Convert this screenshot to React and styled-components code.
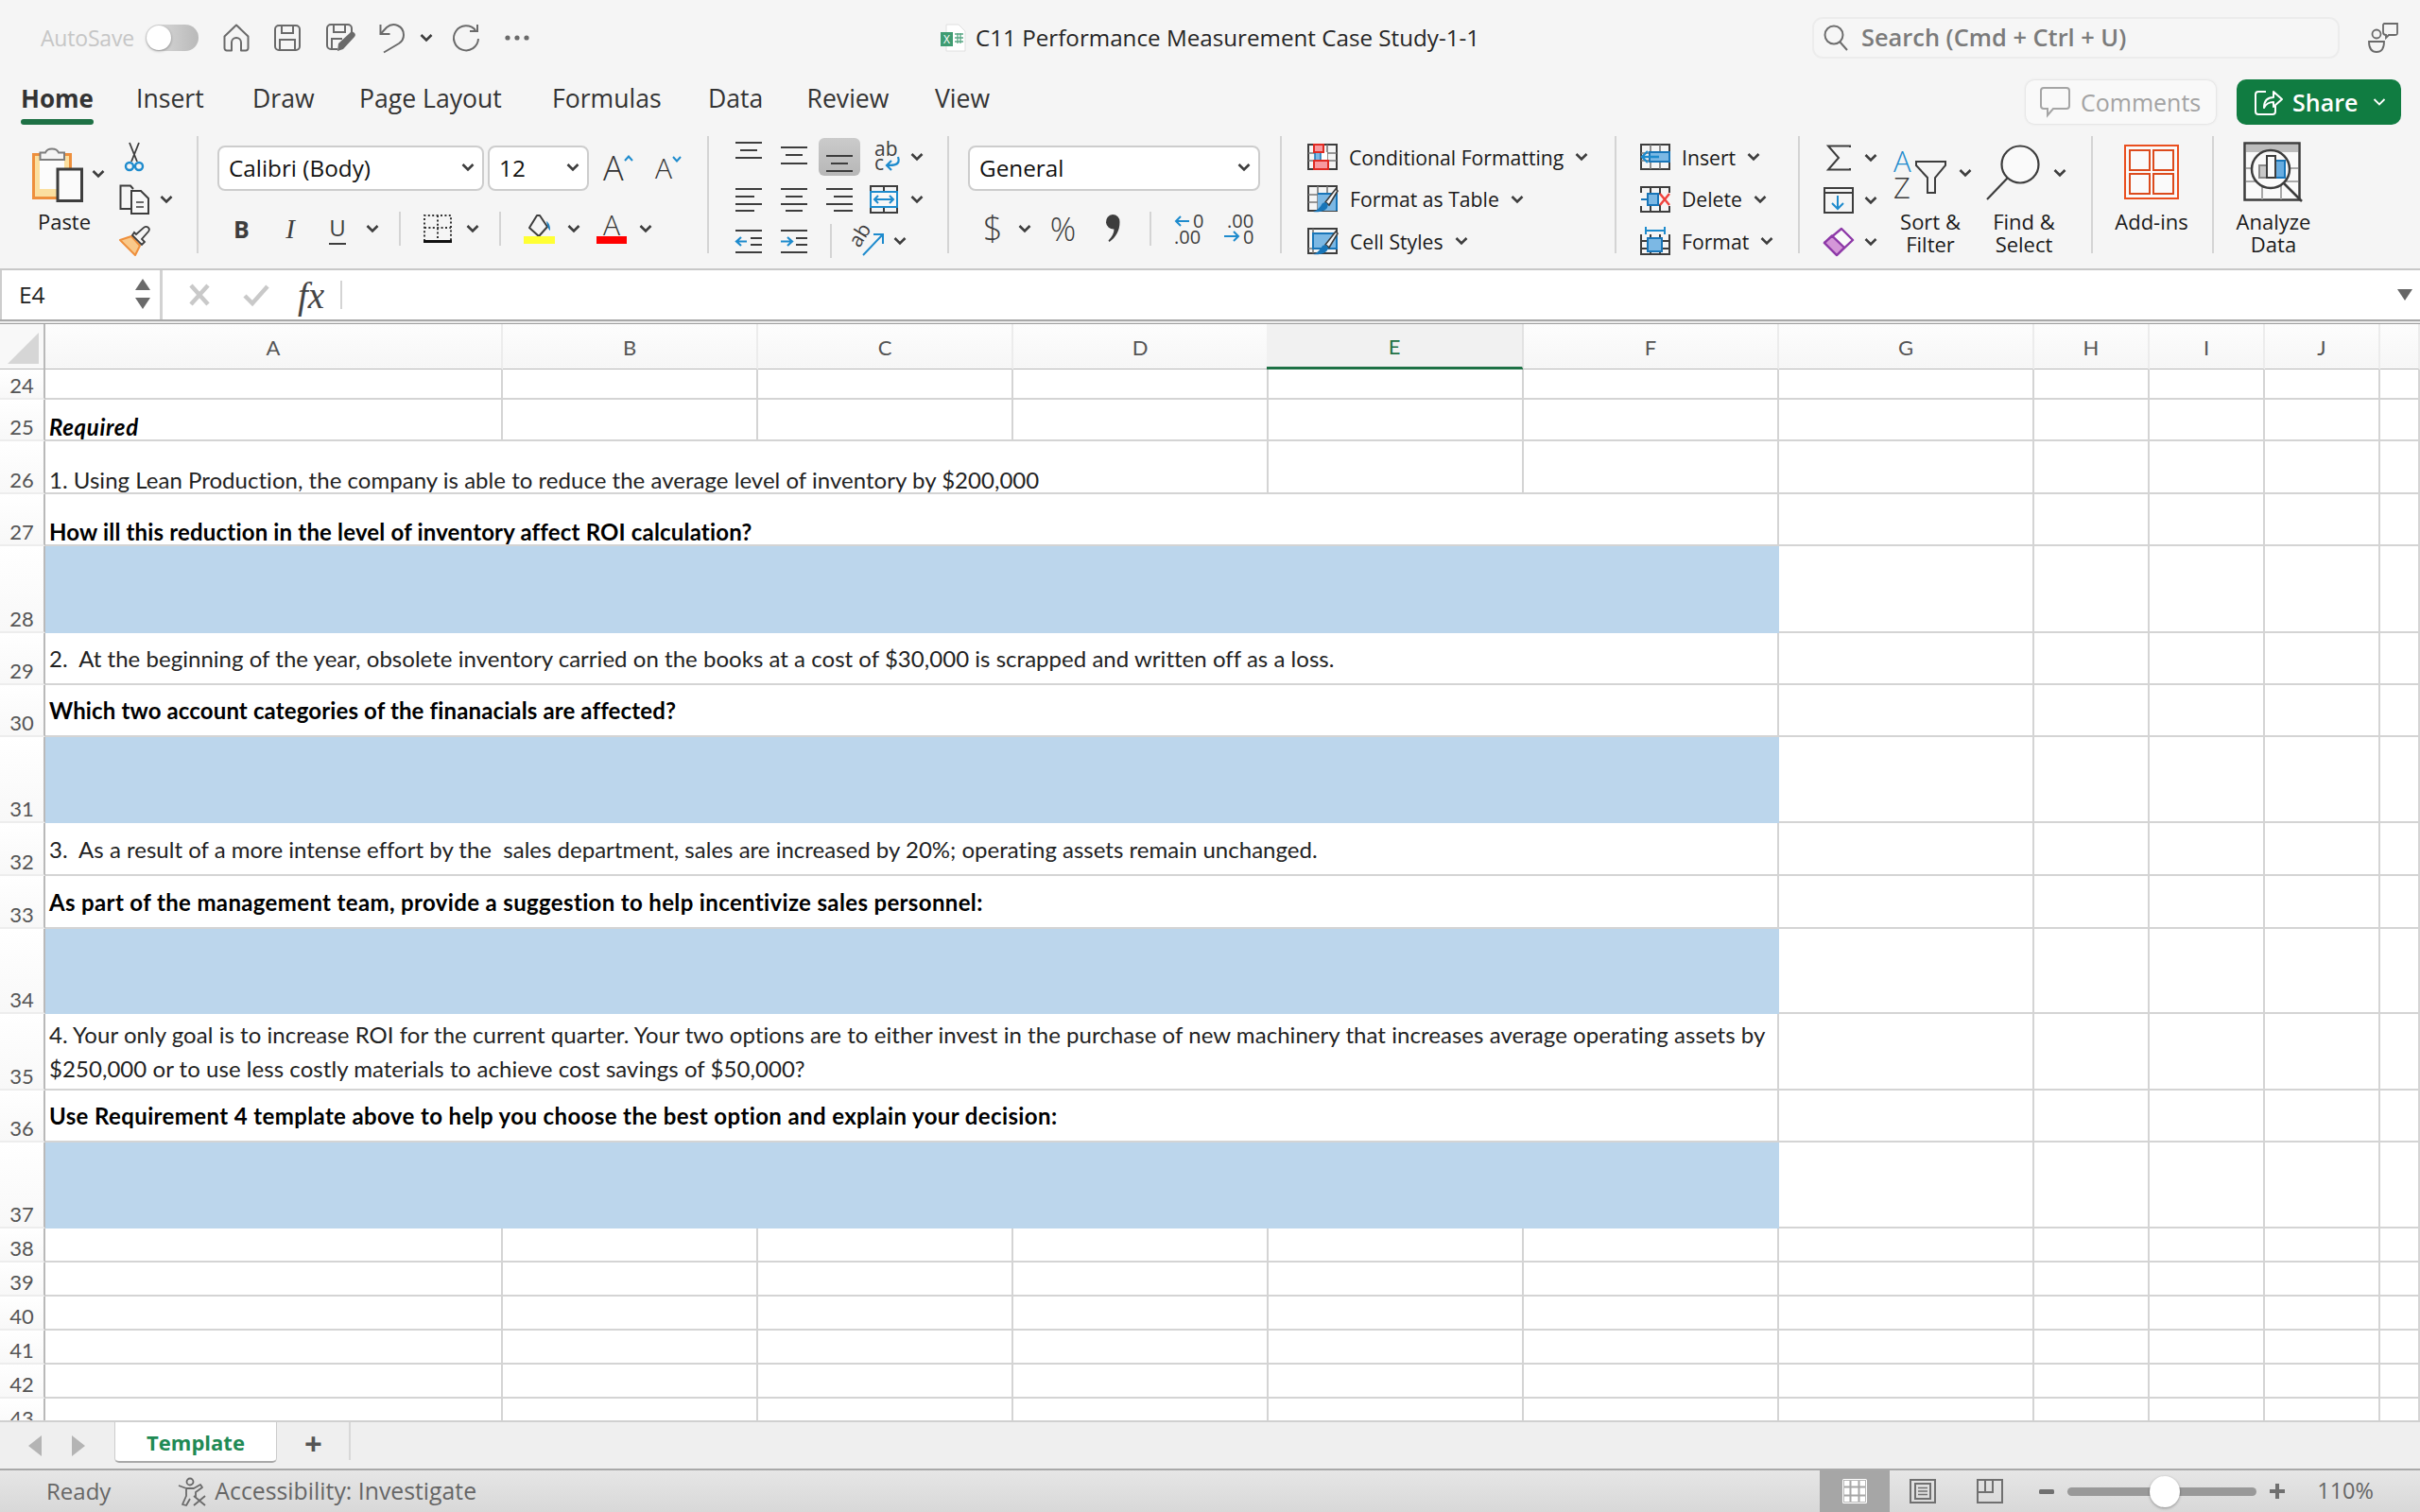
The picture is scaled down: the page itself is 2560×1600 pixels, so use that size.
import styled, { createGlobalStyle } from "styled-components";

const UI_FONT = `"Open Sans", "Noto Sans", sans-serif`;
const CELL_FONT = `"Lato", "Open Sans", sans-serif`;
const INK = "#3d3d3d";
const BLUE = "#1e8bcd";

const GlobalStyle = createGlobalStyle`
  html, body { margin: 0; padding: 0; background: #f5f5f5; }
  body { font-family: ${UI_FONT}; color: #1a1a1a; }
  * { box-sizing: border-box; }
`;

const Page = styled.div`
  width: 2560px;
  height: 1600px;
  overflow: hidden;
  display: flex;
  flex-direction: column;
  background: #f5f5f5;
`;

/* ---------- title bar ---------- */
const TitleBar = styled.div`
  height: 80px;
  display: grid;
  grid-template-columns: 995px 922px 1fr;
  align-items: center;
`;
const TitleLeft = styled.div`
  display: flex;
  align-items: center;
  padding-left: 43px;
`;
const AutoSave = styled.span`
  font-size: 23px;
  color: #c6c6c6;
  width: 100px;
  letter-spacing: -0.2px;
`;
const Toggle = styled.div`
  width: 56px;
  height: 28px;
  margin-left: 11px;
  border-radius: 14px;
  background: linear-gradient(90deg, #e0e0e0, #b9b9b9);
  display: flex;
  align-items: center;
  padding-left: 1px;
  &::before {
    content: "";
    width: 26px;
    height: 26px;
    border-radius: 50%;
    background: #fff;
    box-shadow: 0 1px 3px rgba(0, 0, 0, 0.35);
  }
`;
const Tool = styled.span`
  display: inline-flex;
  align-items: center;
  justify-content: center;
  flex-shrink: 0;
  margin-left: ${(p) => p.$ml || 0}px;
`;
const DocTitle = styled.div`
  display: flex;
  align-items: center;
  font-size: 24.2px;
  color: #262626;
  white-space: nowrap;
`;
const DocName = styled.span`
  margin: -1px 0 0 10px;
`;
const TitleRight = styled.div`
  display: flex;
  align-items: center;
`;
const SearchBox = styled.div`
  width: 558px;
  height: 44px;
  border: 2px solid #ececec;
  border-radius: 11px;
  background: #f6f6f6;
  display: flex;
  align-items: center;
  padding-left: 10px;
`;
const SearchText = styled.span`
  margin: -2px 0 0 14px;
  font-size: 25.4px;
  font-weight: 600;
  color: #7b7b7b;
  white-space: nowrap;
`;

/* ---------- tabs ---------- */
const TabRow = styled.div`
  height: 64px;
  display: flex;
  align-items: flex-start;
  padding: 4px 20px 0 22px;
`;
const Tabs = styled.div`
  display: grid;
  grid-template-columns: 122px 123px 113px 204px 165px 104.5px 135.5px auto;
  justify-items: start;
  margin-top: 3px;
`;
const Tab = styled.div`
  font-size: ${(p) => (p.$active ? 26 : 26.6)}px;
  line-height: 35px;
  font-weight: ${(p) => (p.$active ? 700 : 500)};
  color: #333;
  &::after {
    content: "";
    display: block;
    height: 6px;
    margin-top: 4px;
    border-radius: 3px;
    background: ${(p) => (p.$active ? "#1e7145" : "transparent")};
  }
`;
const CommentsBtn = styled.div`
  margin: 1px 0 0 auto;
  width: 201px;
  height: 46px;
  border-radius: 9px;
  background: #f9f9f9;
  box-shadow: 0 0 3px rgba(0, 0, 0, 0.16);
  display: flex;
  align-items: center;
  padding-left: 15px;
  gap: 11px;
  font-size: 25px;
  color: #a3a3a3;
`;
const ShareBtn = styled.div`
  margin-left: 22px;
  width: 174px;
  height: 48px;
  border-radius: 10px;
  background: #107c41;
  display: flex;
  align-items: center;
  padding-left: 19px;
  gap: 10px;
  font-size: 25px;
  font-weight: 600;
  color: #fff;
`;

/* ---------- ribbon ---------- */
const Ribbon = styled.div`
  height: 140px;
  display: flex;
  align-items: flex-start;
`;
const Group = styled.div`
  width: ${(p) => p.$w}px;
  height: 124px;
  flex-shrink: 0;
  display: flex;
  border-right: ${(p) => (p.$last ? "none" : "2px solid #d4d4d4")};
  padding-left: ${(p) => p.$pl || 0}px;
`;
const Stack = styled.div`
  display: grid;
  grid-auto-rows: 44px;
  row-gap: 0.5px;
`;
const Row = styled.div`
  display: flex;
  align-items: center;
`;
const PasteCol = styled.div`
  width: 92px;
  padding-top: 10px;
`;
const PasteLabel = styled.div`
  width: 68px;
  margin-top: 8px;
  text-align: center;
  font-size: 22px;
  line-height: 24px;
  color: #1a1a1a;
`;
const FontCol = styled.div`
  padding-top: 10px;
`;
const ToolRow = styled.div`
  display: flex;
  align-items: center;
  height: 36px;
  margin-top: 22px;
`;
const SelectBox = styled.div`
  width: ${(p) => p.$w}px;
  height: 48px;
  margin-left: ${(p) => p.$ml || 0}px;
  flex-shrink: 0;
  border: 2px solid #cdcdcd;
  border-radius: 8px;
  background: #fff;
  display: flex;
  align-items: center;
  justify-content: space-between;
  padding: 0 8px 2px 10px;
  font-size: 24.3px;
  color: #111;
`;
const GlyphBtn = styled.span`
  display: inline-block;
  width: ${(p) => p.$w}px;
  margin-left: ${(p) => p.$ml || 0}px;
  flex-shrink: 0;
  text-align: center;
  font-family: ${(p) => (p.$serif ? `"Liberation Serif", serif` : UI_FONT)};
  font-size: ${(p) => p.$size || 25}px;
  font-weight: ${(p) => p.$weight || 400};
  font-style: ${(p) => (p.$italic ? "italic" : "normal")};
  line-height: 32px;
  color: ${INK};
  border-bottom: ${(p) => (p.$under ? `2px solid ${INK}` : "none")};
`;
const FontStep = styled.span`
  display: inline-flex;
  align-items: flex-start;
  width: ${(p) => p.$w}px;
  margin-left: ${(p) => p.$ml || 0}px;
  flex-shrink: 0;
`;
const StepLetter = styled.span`
  font-size: ${(p) => p.$size}px;
  font-weight: 300;
  line-height: 34px;
  color: #333;
`;
const ColorLetter = styled.span`
  width: 32px;
  margin-left: ${(p) => p.$ml || 0}px;
  flex-shrink: 0;
  text-align: center;
  font-size: 30px;
  font-weight: 300;
  line-height: 24px;
  color: #333;
  &::after {
    content: "";
    display: block;
    height: 8px;
    background: #ff0000;
  }
`;
const VSep = styled.span`
  width: 2px;
  height: ${(p) => p.$h || 36}px;
  margin-left: ${(p) => p.$ml || 0}px;
  flex-shrink: 0;
  background: #d4d4d4;
`;
const Highlight = styled.span`
  width: 44px;
  height: 40px;
  margin-left: ${(p) => p.$ml || 0}px;
  flex-shrink: 0;
  border-radius: 6px;
  background: linear-gradient(#cbcbcb, #b7b7b7);
  display: inline-flex;
  justify-content: center;
`;
const StyleLabel = styled.span`
  margin-left: 12px;
  font-size: 21.2px;
  color: #1a1a1a;
  white-space: nowrap;
`;
const BigCol = styled.div`
  width: ${(p) => p.$w}px;
  flex-shrink: 0;
  padding-top: ${(p) => p.$pt || 10}px;
`;
const BigIcon = styled.div`
  height: ${(p) => p.$h || 58}px;
  margin-bottom: ${(p) => p.$mb || 10}px;
  display: flex;
  align-items: center;
  justify-content: ${(p) => (p.$center ? "center" : "flex-start")};
`;
const BigLabel = styled.div`
  text-align: center;
  font-size: 22px;
  line-height: 24px;
  color: #1a1a1a;
`;

/* ---------- formula bar ---------- */
const FormulaBar = styled.div`
  height: 54px;
  display: flex;
  background: #fff;
  border-top: 2px solid #c8c8c8;
`;
const NameBox = styled.div`
  width: 172px;
  flex-shrink: 0;
  display: flex;
  align-items: center;
  justify-content: space-between;
  padding: 0 10px 2px 18px;
  border-left: 2px solid #cdcdcd;
  border-right: 3px solid #d2d2d2;
  font-size: 24.5px;
  color: #222;
`;
const Spinner = styled.div`
  display: flex;
  flex-direction: column;
  gap: 8px;
`;
const FormulaTools = styled.div`
  flex: 1;
  display: flex;
  align-items: center;
`;
const FxGlyph = styled.span`
  margin-left: 30px;
  font-family: "Liberation Serif", serif;
  font-style: italic;
  font-size: 39px;
  color: #444;
  width: 30px;
`;
const BarEnd = styled.span`
  margin: 0 8px 0 auto;
`;
const BarDivider = styled.div`
  height: 5px;
  background: linear-gradient(#a9a9a9 0 1.5px, #ececec 1.5px 3.5px, #a0a0a0 3.5px);
`;

/* ---------- sheet ---------- */
const COLUMNS = "48px 484px repeat(6, 270px) repeat(3, 122px) 1fr";

const Sheet = styled.div`
  height: 1160px;
  overflow: hidden;
  background: #fff;
`;
const HeadRow = styled.div`
  display: grid;
  grid-template-columns: ${COLUMNS};
  height: 48px;
`;
const Corner = styled.div`
  border-right: 2px solid #b9b9b9;
  border-bottom: 2px solid #b9b9b9;
  background: #f8f8f8;
  padding: 9px 0 0 8px;
`;
const ColHead = styled.div`
  display: flex;
  align-items: center;
  justify-content: center;
  padding-top: 2px;
  font-family: ${CELL_FONT};
  font-size: 22px;
  color: ${(p) => (p.$active ? "#1e7145" : "#555")};
  background: ${(p) => (p.$active ? "#f1f1f1" : "linear-gradient(#fdfdfd, #f6f6f6)")};
  border-right: 2px solid ${(p) => (p.$active ? "#e2e2e2" : "#ececec")};
  border-bottom: ${(p) => (p.$active ? "4px solid #1e7145" : "2px solid #b9b9b9")};
  margin-left: ${(p) => (p.$active ? "-2px" : "0")};
`;
const SheetRow = styled.div`
  display: grid;
  grid-template-columns: ${COLUMNS};
  height: ${(p) => p.$h}px;
`;
const RowHead = styled.div`
  display: flex;
  align-items: flex-end;
  justify-content: center;
  font-family: ${CELL_FONT};
  font-size: 22px;
  line-height: 27px;
  color: #555;
  background: linear-gradient(#fff, #f8f8f8);
  border-right: 2px solid #b9b9b9;
  border-bottom: 2px solid #ededed;
`;
const Cell = styled.div`
  grid-column: span ${(p) => p.$span || 1};
  display: flex;
  align-items: ${(p) => (p.$mid ? "center" : "flex-end")};
  padding-left: 4px;
  font-family: ${CELL_FONT};
  font-size: 24px;
  line-height: ${(p) => (p.$lh ? p.$lh : 27)}px;
  letter-spacing: ${(p) => p.$ls ?? 0.03}px;
  font-weight: ${(p) => (p.$bold ? 700 : 400)};
  font-style: ${(p) => (p.$italic ? "italic" : "normal")};
  color: ${(p) => (p.$bold ? "#000" : "#222")};
  background: ${(p) => (p.$fill ? "#bcd6ec" : "#fff")};
  border-right: 2px solid ${(p) => (p.$fill ? "#bcd6ec" : "#d4d4d4")};
  border-bottom: 2px solid ${(p) => (p.$fill ? "#bcd6ec" : "#d4d4d4")};
  white-space: pre;
`;

/* ---------- sheet tabs + status ---------- */
const SheetTabs = styled.div`
  height: 51px;
  display: flex;
  align-items: flex-start;
  background: #efefef;
  border-top: 2px solid #d0d0d0;
`;
const ArrowSlot = styled.span`
  margin: 14px 0 0 ${(p) => p.$ml}px;
  display: inline-flex;
`;
const ActiveSheet = styled.div`
  width: 172px;
  height: 43px;
  margin-left: 31px;
  background: #fff;
  border-bottom: 2px solid #a9a9a9;
  border-left: 1px solid #ccc;
  border-right: 1px solid #ccc;
  border-radius: 0 0 5px 5px;
  display: flex;
  align-items: center;
  justify-content: center;
  font-size: 22px;
  font-weight: 700;
  color: #1f8a54;
`;
const AddSheet = styled.span`
  margin: 5px 0 0 29px;
  font-size: 33px;
  font-weight: 700;
  line-height: 36px;
  color: #555;
`;
const SheetSep = styled.span`
  width: 2px;
  height: 40px;
  margin-left: 28px;
  background: #d8d8d8;
`;
const StatusBar = styled.div`
  height: 46px;
  display: flex;
  align-items: center;
  border-top: 2px solid #a8a8a8;
  background: linear-gradient(#e6e6e6, #d8d8d8);
  padding-left: 49px;
  font-size: 24px;
  color: #666;
`;
const StatusText = styled.span`
  margin-top: -2px;
  font-size: ${(p) => p.$size || 24}px;
  margin-left: ${(p) => p.$ml || 0}px;
  white-space: nowrap;
`;
const StatusRight = styled.div`
  margin-left: auto;
  height: 100%;
  display: flex;
  align-items: center;
`;
const ViewBtn = styled.div`
  width: ${(p) => p.$w}px;
  height: 100%;
  display: flex;
  align-items: center;
  justify-content: center;
  background: ${(p) => (p.$active ? "#a6a6a6" : "transparent")};
`;
const Slider = styled.div`
  position: relative;
  width: 200px;
  height: 9px;
  margin-left: 14px;
  border-radius: 5px;
  background: #999;
`;
const Knob = styled.div`
  position: absolute;
  left: 87px;
  top: -12px;
  width: 32px;
  height: 33px;
  border-radius: 50%;
  background: #fff;
  box-shadow: 0 1px 3px rgba(0, 0, 0, 0.35);
`;
const ZoomPct = styled.span`
  margin: -2px 49px 0 34px;
  font-size: 23.5px;
`;

/* ---------- icons ---------- */
const Svg = ({ w, h, children }) => (
  <svg width={w} height={h} viewBox={`0 0 ${w} ${h}`} fill="none" overflow="visible">
    {children}
  </svg>
);

const Chev = ({ ml = 0, color = INK, weight = 2.6 }) => (
  <Tool $ml={ml}>
    <Svg w={14} h={10}>
      <path d="M1.5 2 L7 7.5 L12.5 2" stroke={color} strokeWidth={weight} />
    </Svg>
  </Tool>
);

const GRAY = "#6a6a6a";

const HomeIcon = () => (
  <Svg w={28} h={30}>
    <path d="M1.5 13.5 L14 1.5 L26.5 13.5 V26 a2.5 2.5 0 0 1 -2.5 2.5 H19 V20 a5 5 0 0 0 -10 0 V28.5 H4 a2.5 2.5 0 0 1 -2.5 -2.5 Z" stroke={GRAY} strokeWidth="2" strokeLinejoin="round" />
  </Svg>
);
const SaveIcon = () => (
  <Svg w={28} h={28}>
    <rect x="1" y="1" width="26" height="26" rx="4" stroke={GRAY} strokeWidth="2" />
    <path d="M8 1 V9 H20 V1 M6 27 V16 H22 V27" stroke={GRAY} strokeWidth="2" />
  </Svg>
);
const SaveAsIcon = () => (
  <Svg w={31} h={30}>
    <path d="M12 27 H5 a4 4 0 0 1 -4 -4 V5 a4 4 0 0 1 4 -4 H23 a4 4 0 0 1 4 4 V10" stroke={GRAY} strokeWidth="2" />
    <path d="M8 1 V9 H20 V1 M6 27 V16 H17" stroke={GRAY} strokeWidth="2" />
    <path d="M12 29 L13 21 L25 10 a3 3 0 0 1 5 4 L18 27 Z" fill={GRAY} />
  </Svg>
);
const UndoIcon = () => (
  <Svg w={28} h={32}>
    <path d="M1.5 2 V12 H11.5" stroke={GRAY} strokeWidth="2" />
    <path d="M1.5 12 L8 5 C15 -1 26 3 26 13 C26 17 24 20 21 22 L5 31.5" stroke={GRAY} strokeWidth="2" />
  </Svg>
);
const RedoIcon = () => (
  <Svg w={28} h={28}>
    <path d="M24 6 A13 13 0 1 0 27 15" stroke={GRAY} strokeWidth="2" />
    <path d="M26 0 V7 H18" stroke={GRAY} strokeWidth="2" />
  </Svg>
);
const DotsIcon = () => (
  <Svg w={26} h={6}>
    <circle cx="3" cy="3" r="2.6" fill={GRAY} />
    <circle cx="13" cy="3" r="2.6" fill={GRAY} />
    <circle cx="23" cy="3" r="2.6" fill={GRAY} />
  </Svg>
);
const DocIcon = () => (
  <Svg w={27} h={30}>
    <path d="M6 1 H19 L26 8 V29 H6 Z" fill="#fff" stroke="#dfdfdf" />
    <rect x="0" y="9" width="13" height="15" fill="#3f9c72" />
    <text x="6.5" y="21" textAnchor="middle" fontSize="12" fill="#fff" fontFamily="Open Sans">X</text>
    <path d="M15 11 h9 M15 15 h9 M15 19 h9 M18 10 v11 M21 10 v11" stroke="#5aa885" strokeWidth="1.3" />
  </Svg>
);
const SearchIcon = () => (
  <Svg w={26} h={28}>
    <circle cx="11" cy="11" r="9.5" stroke="#6d6d6d" strokeWidth="2" />
    <path d="M17 18 L25 27" stroke="#6d6d6d" strokeWidth="2" />
  </Svg>
);
const PersonIcon = () => (
  <Svg w={32} h={32}>
    <circle cx="9" cy="12" r="4.5" stroke={GRAY} strokeWidth="1.8" />
    <path d="M1 20 H17 C17 27 14 31 9 31 C4 31 1 27 1 20 Z" stroke={GRAY} strokeWidth="1.8" />
    <path d="M17 1 H31 V11 C31 13 30 13 28 13 H22 L19 16 V13 C17 13 16 12 16 10 V2 Z" stroke={GRAY} strokeWidth="1.8" />
  </Svg>
);
const BubbleIcon = () => (
  <Svg w={32} h={32}>
    <path d="M4 1 H28 a3 3 0 0 1 3 3 V20 a3 3 0 0 1 -3 3 H14 L8 30 V23 H4 a3 3 0 0 1 -3 -3 V4 a3 3 0 0 1 3 -3 Z" stroke="#a5a5a5" strokeWidth="2" />
  </Svg>
);
const ShareIcon = () => (
  <Svg w={30} h={30}>
    <path d="M12 4 H4 a3 3 0 0 0 -3 3 V25 a3 3 0 0 0 3 3 H19 a3 3 0 0 0 3 -3 V19" stroke="#fff" strokeWidth="2" />
    <path d="M10 21 C10 13 14 10 20 10 V4 L29 12 L20 20 V15 C15 15 12 17 10 21 Z" stroke="#fff" strokeWidth="2" strokeLinejoin="round" />
  </Svg>
);

const PasteIcon = () => (
  <Svg w={54} h={60}>
    <rect x="1.5" y="9.5" width="39" height="46" fill="#fbdf9f" stroke="#ee8f3c" strokeWidth="3" />
    <rect x="8" y="12" width="26" height="34" fill="#fcfcfc" />
    <path d="M8.5 15 H34 V7.5 H28 C26 2 16 2 14 7.5 H8.5 Z" fill="#f4f4f4" stroke="#7d7d7d" strokeWidth="2" />
    <rect x="27" y="25" width="25.5" height="33.5" fill="#fafafa" stroke={INK} strokeWidth="3" />
  </Svg>
);
const CutIcon = () => (
  <Svg w={32} h={32}>
    <path d="M11 1 L19 21 M21 1 L13 21" stroke={INK} strokeWidth="1.8" />
    <circle cx="11" cy="26" r="4" stroke={BLUE} strokeWidth="2.4" />
    <circle cx="21" cy="26" r="4" stroke={BLUE} strokeWidth="2.4" />
  </Svg>
);
const CopyIcon = () => (
  <Svg w={32} h={32}>
    <path d="M12 26 H1.5 V1.5 H12 L15 5" stroke={INK} strokeWidth="2" />
    <path d="M13 7 H23 L31 15 V31 H13 Z" fill="#f8f8f8" stroke={INK} strokeWidth="2" />
    <path d="M18 19 H26 M18 24 H26" stroke={GRAY} strokeWidth="2" />
  </Svg>
);
const PainterIcon = () => (
  <Svg w={32} h={30}>
    <path d="M1 14 L13 10 L22 20 L17 30 Z" fill="#f9c98a" stroke="#ee8f3c" strokeWidth="2" strokeLinejoin="round" />
    <path d="M14 9 L24 19 L27 16 L24 13 L31 5 a3 3 0 0 0 -5 -4 L18 8 L16 6 Z" fill="#f4f4f4" stroke={INK} strokeWidth="1.8" />
  </Svg>
);
const CaretUp = () => (
  <Svg w={10} h={10}>
    <path d="M1 9 L5 4.5 L9 9" stroke={BLUE} strokeWidth="2" />
  </Svg>
);
const CaretDown = () => (
  <Svg w={10} h={12}>
    <path d="M1 5 L5 9.5 L9 5" stroke={BLUE} strokeWidth="2" />
  </Svg>
);
const BorderIcon = () => (
  <Svg w={30} h={30}>
    <path d="M1 28 V1 H29 V28 M15 1 V26 M1 14 H29" stroke="#333" strokeWidth="2" strokeDasharray="2 2.4" />
    <path d="M0 28.5 H30" stroke="#111" strokeWidth="3" />
  </Svg>
);
const FillIcon = () => (
  <Svg w={33} h={32}>
    <path d="M14 2 H17 L25 14 L16 24 L6 15 Z" stroke={INK} strokeWidth="2" strokeLinejoin="round" />
    <path d="M24 8 C27 10 28 13 28 18 C26 17 25 13 24 8 Z" fill="#1c7fc0" />
    <rect x="0" y="24" width="33" height="8" fill="#ffff33" />
  </Svg>
);
const CommaIcon = () => (
  <Svg w={15} h={30}>
    <path d="M7 0 a7.5 7.5 0 0 1 7.5 8 c0 9 -4 16 -11 21 l-1 -1.5 c4 -4 6 -8 6 -12 a7.5 7.5 0 1 1 -1.5 -15.5 Z" fill={INK} />
  </Svg>
);

const AlignV = ({ lines, short = 1 }) => (
  <Svg w={28} h={40}>
    {lines.map((y, i) => (
      <path key={y} d={i === short ? `M5 ${y} H23` : `M0 ${y} H28`} stroke={INK} strokeWidth="2" />
    ))}
  </Svg>
);
const AlignH = ({ kind }) => {
  const short = kind === "left" ? [0, 20] : kind === "right" ? [8, 28] : [5, 23];
  return (
    <Svg w={28} h={26}>
      {[2, 10, 18, 25].map((y, i) => {
        const [a, b] = i % 2 ? short : [0, 28];
        return <path key={y} d={`M${a} ${y} H${b}`} stroke={INK} strokeWidth="2" />;
      })}
    </Svg>
  );
};
const WrapIcon = () => (
  <Svg w={28} h={30}>
    <text x="0" y="14" fontSize="21" fill={INK} fontFamily="Open Sans">ab</text>
    <text x="0" y="29" fontSize="21" fill={INK} fontFamily="Open Sans">c</text>
    <path d="M25 15 C28 24 20 24 13 24 M18 19 L13 24 L18 29" stroke={BLUE} strokeWidth="2.2" />
  </Svg>
);
const MergeIcon = () => (
  <Svg w={30} h={30}>
    <rect x="1" y="1" width="28" height="28" stroke={INK} strokeWidth="2" />
    <path d="M15 1 V7 M15 23 V29" stroke={INK} strokeWidth="2" />
    <rect x="1" y="7" width="28" height="16" fill="#f8f8f8" stroke={BLUE} strokeWidth="2" />
    <path d="M5 15 H25 M9 11 L5 15 L9 19 M21 11 L25 15 L21 19" stroke={BLUE} strokeWidth="2" />
  </Svg>
);
const IndentIcon = ({ increase }) => (
  <Svg w={28} h={26}>
    <path d="M0 2 H28 M0 25 H28 M16 10 H28 M16 17 H28" stroke={INK} strokeWidth="2" />
    {increase ? (
      <path d="M0 13.5 H11 M7 9 L12 13.5 L7 18" stroke={BLUE} strokeWidth="2.2" />
    ) : (
      <path d="M12 13.5 H1 M6 9 L1 13.5 L6 18" stroke={BLUE} strokeWidth="2.2" />
    )}
  </Svg>
);
const OrientIcon = () => (
  <Svg w={33} h={32}>
    <text x="0" y="0" fontSize="21" fill={INK} fontFamily="Open Sans" transform="translate(7 24) rotate(-58)">ab</text>
    <path d="M11 31 L31 10 M22 9 H32 V19" stroke={BLUE} strokeWidth="2" />
  </Svg>
);
const IncDecimal = () => (
  <Svg w={32} h={32}>
    <text x="20" y="15" fontSize="20" fill={INK} fontFamily="Open Sans">0</text>
    <text x="0" y="32" fontSize="20" fill={INK} fontFamily="Open Sans">.00</text>
    <path d="M16 8 H2 M7 3 L2 8 L7 13" stroke={BLUE} strokeWidth="2" />
  </Svg>
);
const DecDecimal = () => (
  <Svg w={32} h={32}>
    <text x="3" y="15" fontSize="20" fill={INK} fontFamily="Open Sans">.00</text>
    <text x="20" y="32" fontSize="20" fill={INK} fontFamily="Open Sans">0</text>
    <path d="M0 24 H15 M10 19 L15 24 L10 29" stroke={BLUE} strokeWidth="2" />
  </Svg>
);

const GridFrame = ({ children }) => (
  <>
    <rect x="1" y="1" width="30" height="26" stroke={INK} strokeWidth="2" />
    <path d="M11 1 V27 M21 1 V27 M1 10 H31 M1 18 H31" stroke="#777" strokeWidth="1.6" />
    {children}
  </>
);
const CondIcon = () => (
  <Svg w={32} h={28}>
    <GridFrame>
      <rect x="11" y="9" width="10" height="10" fill="#fff" />
      <rect x="8" y="9" width="6" height="9" fill="#7cb8e4" stroke="#1875b8" strokeWidth="1.5" />
      <rect x="7" y="1" width="10" height="8" fill="#f79aa0" stroke="#e02a22" strokeWidth="2" />
      <rect x="7" y="18" width="15" height="9" fill="#f79aa0" stroke="#e02a22" strokeWidth="2" />
    </GridFrame>
  </Svg>
);
const Brush = () => (
  <>
    <path d="M19 18 L30 4 L32 6 L23 21 Z" fill="#f5f5f5" stroke={INK} strokeWidth="1.6" />
    <path d="M16 19 C20 17 23 20 21 24 C18 28 11 29 6 28 C10 27 13 24 16 19 Z" fill="#1875b8" />
  </>
);
const TableIcon = () => (
  <Svg w={33} h={29}>
    <GridFrame>
      <rect x="11" y="9" width="20" height="18" fill="#7cb8e4" />
      <path d="M11 9 H31 V27" stroke="#1875b8" strokeWidth="2" />
    </GridFrame>
    <Brush />
  </Svg>
);
const CellStyleIcon = () => (
  <Svg w={33} h={29}>
    <rect x="1" y="1" width="30" height="26" stroke={INK} strokeWidth="2" />
    <path d="M6 1 V27 M1 22 H31" stroke="#777" strokeWidth="1.6" />
    <rect x="6" y="6" width="25" height="16" fill="#7cb8e4" stroke="#1875b8" strokeWidth="2" />
    <Brush />
  </Svg>
);
const InsertCells = () => (
  <Svg w={32} h={28}>
    <GridFrame>
      <rect x="10" y="9" width="21" height="10" fill="#7cb8e4" stroke="#1875b8" strokeWidth="2" />
      <path d="M20 14 H2 M8 8 L2 14 L8 20" stroke={BLUE} strokeWidth="2.4" />
    </GridFrame>
  </Svg>
);
const DeleteCells = () => (
  <Svg w={32} h={28}>
    <path d="M1 7 V1 H31 V7 M1 21 V27 H31 V21 M11 1 V9 M21 1 V9 M11 19 V27 M21 19 V27" stroke={INK} strokeWidth="2" />
    <rect x="8" y="8" width="11" height="12" fill="#7cb8e4" stroke="#1875b8" strokeWidth="2" />
    <path d="M1 14 H8" stroke="#1875b8" strokeWidth="2" />
    <path d="M21 8 L31 20 M31 8 L21 20" stroke="#f0413c" strokeWidth="2.4" />
  </Svg>
);
const FormatCells = () => (
  <Svg w={32} h={30}>
    <path d="M1 8 V29 H31 V8 M1 15 H31 M1 23 H31 M11 8 V29 M21 8 V29" stroke={INK} strokeWidth="2" />
    <rect x="8" y="12" width="15" height="14" fill="#7cb8e4" stroke="#1875b8" strokeWidth="2" />
    <path d="M6 4 H26 M6 0 V8 M26 0 V8" stroke={BLUE} strokeWidth="2" />
  </Svg>
);
const SumIcon = () => (
  <Svg w={26} h={28}>
    <path d="M25 3 V1.5 H2 L13 14 L2 26.5 H25 V25" stroke={INK} strokeWidth="2" />
  </Svg>
);
const FillDown = () => (
  <Svg w={32} h={28}>
    <rect x="1" y="1" width="30" height="26" stroke={INK} strokeWidth="2" />
    <path d="M1 6 H31" stroke={INK} strokeWidth="2" />
    <path d="M15 9 V23 M9 17 L15 23 L21 17" stroke={BLUE} strokeWidth="2" />
  </Svg>
);
const ClearIcon = () => (
  <Svg w={32} h={30}>
    <path d="M19 1 L31 13 L14 29 L1 16 Z" fill="#fafafa" stroke="#8e3aa8" strokeWidth="2.4" strokeLinejoin="round" />
    <path d="M9 8.5 L22 21 L14 29 L1 16 Z" fill="#d597d8" stroke="#8e3aa8" strokeWidth="2.4" strokeLinejoin="round" />
  </Svg>
);
const SortIcon = () => (
  <Svg w={57} h={54}>
    <text x="0" y="26" fontSize="31" fontWeight="300" fill={BLUE} fontFamily="Open Sans">A</text>
    <text x="0" y="54" fontSize="31" fontWeight="300" fill={INK} fontFamily="Open Sans">Z</text>
    <path d="M24 15 H55 V19 L44 32 V48 H36 V32 L24 19 Z" stroke={INK} strokeWidth="2" />
  </Svg>
);
const FindIcon = () => (
  <Svg w={57} h={60}>
    <circle cx="36" cy="21" r="19.5" fill="#fafafa" stroke={INK} strokeWidth="2.2" />
    <path d="M23 35 L1 58" stroke={INK} strokeWidth="2.2" />
  </Svg>
);
const AddInsIcon = () => (
  <Svg w={58} h={58}>
    <rect x="1" y="1" width="56" height="56" fill="#fafafa" stroke="#ea4f1f" strokeWidth="2" />
    <rect x="6" y="6" width="21" height="21" stroke="#dc4b1d" strokeWidth="2" />
    <rect x="31" y="6" width="21" height="21" stroke="#dc4b1d" strokeWidth="2" />
    <rect x="6" y="31" width="21" height="21" stroke="#dc4b1d" strokeWidth="2" />
    <rect x="31" y="31" width="21" height="21" stroke="#dc4b1d" strokeWidth="2" />
  </Svg>
);
const AnalyzeIcon = () => (
  <Svg w={64} h={64}>
    <rect x="1.5" y="1.5" width="58" height="60" fill="#fafafa" stroke={INK} strokeWidth="2.5" />
    <rect x="3" y="3" width="55" height="8" fill="#bdbdbd" />
    <path d="M3 28 H58 M3 42 H58 M20 42 V61 M40 42 V61" stroke="#a8a8a8" strokeWidth="2" />
    <circle cx="29" cy="29" r="20" fill="#fafafa" stroke={INK} strokeWidth="2.5" />
    <rect x="17" y="25" width="10" height="13" fill="#c9c9c9" stroke="#888" strokeWidth="2" />
    <rect x="34" y="20" width="10" height="18" fill="#67ace0" stroke="#1875b8" strokeWidth="2" />
    <rect x="25" y="15" width="9" height="23" fill="#fafafa" stroke={INK} strokeWidth="2" />
    <path d="M43 44 L62 63" stroke={INK} strokeWidth="2.5" />
  </Svg>
);
const TriangleIcon = ({ dir, color = "#6a6a6a" }) => {
  const shapes = {
    up: "M8 0 L16 12 H0 Z",
    down: "M0 0 H16 L8 12 Z",
    left: "M14 0 V22 L0 11 Z",
    right: "M0 0 V22 L14 11 Z",
  };
  const horizontal = dir === "left" || dir === "right";
  return (
    <Svg w={horizontal ? 14 : 16} h={horizontal ? 22 : 12}>
      <path d={shapes[dir]} fill={color} />
    </Svg>
  );
};
const CrossIcon = () => (
  <Svg w={22} h={22}>
    <path d="M2 1 L20 21 M20 1 L2 21" stroke="#c9c9c9" strokeWidth="4.5" />
  </Svg>
);
const CheckIcon = () => (
  <Svg w={28} h={22}>
    <path d="M2 12 L10 20 L26 2" stroke="#c9c9c9" strokeWidth="4.5" />
  </Svg>
);
const CornerIcon = () => (
  <Svg w={33} h={33}>
    <path d="M33 0 V33 H0 Z" fill="#d6d6d6" />
  </Svg>
);
const A11yIcon = () => (
  <Svg w={31} h={30}>
    <circle cx="13" cy="5" r="3.5" stroke={GRAY} strokeWidth="1.8" />
    <path d="M1 9 L9 12 H17 L24 8 L26 11 L19 16 V22 M9 13 V20 L5 29 L9 30 L13 23" stroke={GRAY} strokeWidth="1.8" strokeLinejoin="round" />
    <path d="M17 20 L29 30 M29 20 L17 30" stroke={GRAY} strokeWidth="1.8" />
  </Svg>
);
const NormalView = () => (
  <Svg w={26} h={26}>
    <rect x="0" y="0" width="26" height="26" rx="1.5" fill="#fff" />
    <path d="M8.5 2 V24 M17.5 2 V24 M2 8.5 H24 M2 17.5 H24" stroke="#a6a6a6" strokeWidth="2" />
    <rect x="1.5" y="1.5" width="23" height="23" stroke="#a6a6a6" strokeWidth="0.8" />
  </Svg>
);
const LayoutView = () => (
  <Svg w={28} h={26}>
    <rect x="1" y="1" width="26" height="24" stroke="#707070" strokeWidth="2" />
    <rect x="6" y="5" width="16" height="16" stroke="#707070" strokeWidth="2" />
    <path d="M9 9.5 H19 M9 13 H19 M9 16.5 H19" stroke="#707070" strokeWidth="1.6" />
  </Svg>
);
const BreakView = () => (
  <Svg w={28} h={26}>
    <rect x="1" y="1" width="26" height="24" stroke="#707070" strokeWidth="2" />
    <path d="M1 14 H17 V1 M9 1 V14" stroke="#707070" strokeWidth="2" />
  </Svg>
);

/* ---------- data ---------- */
const COL_HEADS = ["A", "B", "C", "D", "E", "F", "G", "H", "I", "J", ""];

// ls is a per-row letter spacing: Lato stands in for Calibri and drifts a little
const ROWS = [
  { n: 24, h: 32 },
  { n: 25, h: 44, text: "Required", bold: true, italic: true, ls: 0.65 },
  { n: 26, h: 56, span: 4, text: "1. Using Lean Production, the company is able to reduce the average level of inventory by $200,000" },
  { n: 27, h: 55, span: 6, bold: true, ls: 0.17, text: "How ill this reduction in the level of inventory affect ROI calculation?" },
  { n: 28, h: 92, span: 6, fill: true },
  { n: 29, h: 55, span: 6, mid: true, text: "2.  At the beginning of the year, obsolete inventory carried on the books at a cost of $30,000 is scrapped and written off as a loss." },
  { n: 30, h: 55, span: 6, mid: true, bold: true, ls: 0.13, text: "Which two account categories of the finanacials are affected?" },
  { n: 31, h: 91, span: 6, fill: true },
  { n: 32, h: 56, span: 6, mid: true, ls: 0.01, text: "3.  As a result of a more intense effort by the  sales department, sales are increased by 20%; operating assets remain unchanged." },
  { n: 33, h: 56, span: 6, mid: true, bold: true, ls: 0.35, text: "As part of the management team, provide a suggestion to help incentivize sales personnel:" },
  { n: 34, h: 90, span: 6, fill: true },
  {
    n: 35,
    h: 81,
    span: 6,
    mid: true,
    lh: 36,
    ls: 0.05,
    text: "4. Your only goal is to increase ROI for the current quarter. Your two options are to either invest in the purchase of new machinery that increases average operating assets by\n$250,000 or to use less costly materials to achieve cost savings of $50,000?",
  },
  { n: 36, h: 55, span: 6, mid: true, bold: true, ls: 0.38, text: "Use Requirement 4 template above to help you choose the best option and explain your decision:" },
  { n: 37, h: 91, span: 6, fill: true },
  { n: 38, h: 36 },
  { n: 39, h: 36 },
  { n: 40, h: 36 },
  { n: 41, h: 36 },
  { n: 42, h: 36 },
  { n: 43, h: 36 },
];

function SheetRows() {
  return ROWS.map((row) => {
    const span = row.span || 1;
    const rest = Array.from({ length: 11 - span }, (_, i) => i);
    return (
      <SheetRow key={row.n} $h={row.h}>
        <RowHead>{row.n}</RowHead>
        <Cell $span={span} $fill={row.fill} $bold={row.bold} $italic={row.italic} $mid={row.mid} $lh={row.lh} $ls={row.ls}>
          {row.text && <span>{row.text}</span>}
        </Cell>
        {rest.map((i) => (
          <Cell key={i} />
        ))}
      </SheetRow>
    );
  });
}

export default function App() {
  return (
    <Page>
      <GlobalStyle />

      <TitleBar>
        <TitleLeft>
          <AutoSave>AutoSave</AutoSave>
          <Toggle />
          <Tool $ml={26}><HomeIcon /></Tool>
          <Tool $ml={26}><SaveIcon /></Tool>
          <Tool $ml={27}><SaveAsIcon /></Tool>
          <Tool $ml={25}><UndoIcon /></Tool>
          <Chev ml={15} />
          <Tool $ml={21}><RedoIcon /></Tool>
          <Tool $ml={27}><DotsIcon /></Tool>
        </TitleLeft>
        <DocTitle>
          <DocIcon />
          <DocName>C11 Performance Measurement Case Study-1-1</DocName>
        </DocTitle>
        <TitleRight>
          <SearchBox>
            <SearchIcon />
            <SearchText>Search (Cmd + Ctrl + U)</SearchText>
          </SearchBox>
          <Tool $ml={30}><PersonIcon /></Tool>
        </TitleRight>
      </TitleBar>

      <TabRow>
        <Tabs>
          <Tab $active>Home</Tab>
          <Tab>Insert</Tab>
          <Tab>Draw</Tab>
          <Tab>Page Layout</Tab>
          <Tab>Formulas</Tab>
          <Tab>Data</Tab>
          <Tab>Review</Tab>
          <Tab>View</Tab>
        </Tabs>
        <CommentsBtn>
          <BubbleIcon />
          Comments
        </CommentsBtn>
        <ShareBtn>
          <ShareIcon />
          Share
          <Chev ml={6} color="#fff" weight={1.8} />
        </ShareBtn>
      </TabRow>

      <Ribbon>
        <Group $w={210} $pl={34}>
          <PasteCol>
            <Row>
              <PasteIcon />
              <Chev ml={9} />
            </Row>
            <PasteLabel>Paste</PasteLabel>
          </PasteCol>
          <Stack>
            <Row><CutIcon /></Row>
            <Row><CopyIcon /><Chev ml={11} /></Row>
            <Row><PainterIcon /></Row>
          </Stack>
        </Group>

        <Group $w={540} $pl={20}>
          <FontCol>
            <Row>
              <SelectBox $w={282}>Calibri (Body)<Chev /></SelectBox>
              <SelectBox $w={107} $ml={4}>12<Chev /></SelectBox>
              <FontStep $w={32} $ml={15}>
                <StepLetter $size={36}>A</StepLetter>
                <CaretUp />
              </FontStep>
              <FontStep $w={31} $ml={23}>
                <StepLetter $size={30}>A</StepLetter>
                <CaretDown />
              </FontStep>
            </Row>
            <ToolRow>
              <GlyphBtn $w={16} $ml={17} $weight={700}>B</GlyphBtn>
              <GlyphBtn $w={12} $ml={38} $italic $serif $size={29}>I</GlyphBtn>
              <GlyphBtn $w={18} $ml={35} $under $size={24}>U</GlyphBtn>
              <Chev ml={21} />
              <VSep $ml={21} />
              <Tool $ml={24}><BorderIcon /></Tool>
              <Chev ml={15} />
              <VSep $ml={21} />
              <Tool $ml={24}><FillIcon /></Tool>
              <Chev ml={13} />
              <ColorLetter $ml={17}>A</ColorLetter>
              <Chev ml={13} />
            </ToolRow>
          </FontCol>
        </Group>

        <Group $w={254} $pl={28}>
          <Stack>
            <Row>
              <AlignV lines={[5, 13, 21]} />
              <Tool $ml={20}><AlignV lines={[10, 18, 27]} /></Tool>
              <Highlight $ml={12}><AlignV lines={[19, 27, 35]} /></Highlight>
              <Tool $ml={15}><WrapIcon /></Tool>
              <Chev ml={10} />
            </Row>
            <Row>
              <AlignH kind="left" />
              <Tool $ml={20}><AlignH kind="center" /></Tool>
              <Tool $ml={20}><AlignH kind="right" /></Tool>
              <Tool $ml={18}><MergeIcon /></Tool>
              <Chev ml={13} />
            </Row>
            <Row>
              <IndentIcon />
              <Tool $ml={20}><IndentIcon increase /></Tool>
              <VSep $ml={24} />
              <Tool $ml={22}><OrientIcon /></Tool>
              <Chev ml={10} />
            </Row>
          </Stack>
        </Group>

        <Group $w={352} $pl={20}>
          <FontCol>
            <SelectBox $w={309}>General<Chev /></SelectBox>
            <ToolRow>
              <GlyphBtn $w={15} $ml={16} $size={36} $weight={300}>$</GlyphBtn>
              <Chev ml={22} />
              <GlyphBtn $w={29} $ml={19} $size={34} $weight={300}>%</GlyphBtn>
              <Tool $ml={31}><CommaIcon /></Tool>
              <VSep $ml={31} />
              <Tool $ml={24}><IncDecimal /></Tool>
              <Tool $ml={21}><DecDecimal /></Tool>
            </ToolRow>
          </FontCol>
        </Group>

        <Group $w={354} $pl={27}>
          <Stack>
            <Row><CondIcon /><StyleLabel>Conditional Formatting</StyleLabel><Chev ml={12} /></Row>
            <Row><TableIcon /><StyleLabel>Format as Table</StyleLabel><Chev ml={12} /></Row>
            <Row><CellStyleIcon /><StyleLabel>Cell Styles</StyleLabel><Chev ml={12} /></Row>
          </Stack>
        </Group>

        <Group $w={194} $pl={25}>
          <Stack>
            <Row><InsertCells /><StyleLabel>Insert</StyleLabel><Chev ml={12} /></Row>
            <Row><DeleteCells /><StyleLabel>Delete</StyleLabel><Chev ml={12} /></Row>
            <Row><FormatCells /><StyleLabel>Format</StyleLabel><Chev ml={12} /></Row>
          </Stack>
        </Group>

        <Group $w={310}>
          <BigCol $w={88} $pt={1}>
            <Stack>
              <Row><Tool $ml={28}><SumIcon /></Tool><Chev ml={14} /></Row>
              <Row><Tool $ml={25}><FillDown /></Tool><Chev ml={11} /></Row>
              <Row><Tool $ml={25}><ClearIcon /></Tool><Chev ml={11} /></Row>
            </Stack>
          </BigCol>
          <BigCol $w={100}>
            <BigIcon>
              <Tool $ml={11}><SortIcon /></Tool>
              <Chev ml={12} />
            </BigIcon>
            <BigLabel>Sort &amp;<br />Filter</BigLabel>
          </BigCol>
          <BigCol $w={98}>
            <BigIcon>
              <Tool $ml={9}><FindIcon /></Tool>
              <Chev ml={14} />
            </BigIcon>
            <BigLabel>Find &amp;<br />Select</BigLabel>
          </BigCol>
        </Group>

        <Group $w={128}>
          <BigCol $w={124} $pt={9}>
            <BigIcon $center $mb={11}><AddInsIcon /></BigIcon>
            <BigLabel>Add-ins</BigLabel>
          </BigCol>
        </Group>

        <Group $w={218} $last>
          <BigCol $w={126} $pt={6}>
            <BigIcon $center $h={64} $mb={8}><AnalyzeIcon /></BigIcon>
            <BigLabel>Analyze<br />Data</BigLabel>
          </BigCol>
        </Group>
      </Ribbon>

      <FormulaBar>
        <NameBox>
          E4
          <Spinner>
            <TriangleIcon dir="up" />
            <TriangleIcon dir="down" />
          </Spinner>
        </NameBox>
        <FormulaTools>
          <Tool $ml={28}><CrossIcon /></Tool>
          <Tool $ml={35}><CheckIcon /></Tool>
          <FxGlyph>fx</FxGlyph>
          <VSep $h={30} $ml={15} />
          <BarEnd><TriangleIcon dir="down" color="#666" /></BarEnd>
        </FormulaTools>
      </FormulaBar>
      <BarDivider />

      <Sheet>
        <HeadRow>
          <Corner><CornerIcon /></Corner>
          {COL_HEADS.map((c, i) => (
            <ColHead key={i} $active={c === "E"}>{c}</ColHead>
          ))}
        </HeadRow>
        <SheetRows />
      </Sheet>

      <SheetTabs>
        <ArrowSlot $ml={30}><TriangleIcon dir="left" color="#b4b4b4" /></ArrowSlot>
        <ArrowSlot $ml={32}><TriangleIcon dir="right" color="#b4b4b4" /></ArrowSlot>
        <ActiveSheet>Template</ActiveSheet>
        <AddSheet>+</AddSheet>
        <SheetSep />
      </SheetTabs>

      <StatusBar>
        <StatusText>Ready</StatusText>
        <Tool $ml={71}><A11yIcon /></Tool>
        <StatusText $ml={8} $size={24.8}>Accessibility: Investigate</StatusText>
        <StatusRight>
          <ViewBtn $active $w={74}><NormalView /></ViewBtn>
          <ViewBtn $w={70}><LayoutView /></ViewBtn>
          <ViewBtn $w={72}><BreakView /></ViewBtn>
          <Tool $ml={16}>
            <Svg w={16} h={5}><rect width="16" height="5" rx="1.5" fill="#707070" /></Svg>
          </Tool>
          <Slider><Knob /></Slider>
          <Tool $ml={14}>
            <Svg w={16} h={16}><path d="M8 0 V16 M0 8 H16" stroke="#707070" strokeWidth="4" /></Svg>
          </Tool>
          <ZoomPct>110%</ZoomPct>
        </StatusRight>
      </StatusBar>
    </Page>
  );
}
